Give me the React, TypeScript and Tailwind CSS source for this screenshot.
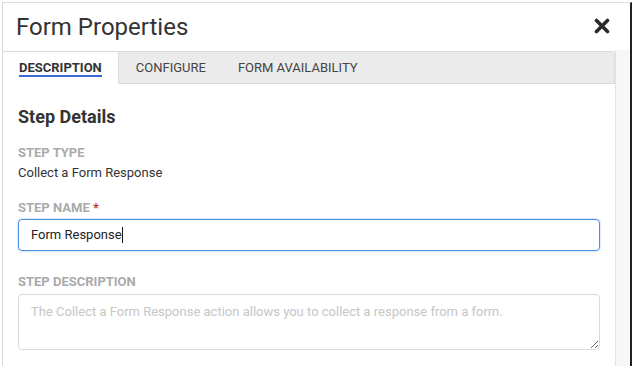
import React from "react";

export default function App() {
  return (
    <div className="w-[632px] h-[366px] bg-white pt-[2px] pl-[2px] overflow-hidden font-['Roboto',sans-serif]">
      <div className="h-[364px] flex flex-col border-t border-l border-t-[#dcdcdc] border-l-[#d6dbe3] border-r-2 border-r-[#222]">
        {/* Header */}
        <div className="h-[47px] flex items-center justify-between pl-[13px] pr-[20px] shrink-0">
          <div className="text-[24px] leading-[28px] text-[#333]">Form Properties</div>
          <svg width="16" height="16" viewBox="0 0 16 16" className="-mt-[1px]">
            <path d="M2.5 2.5 L13.5 13.5 M13.5 2.5 L2.5 13.5" stroke="#2b2b2b" strokeWidth="3.6" strokeLinecap="round" />
          </svg>
        </div>
        {/* Body */}
        <div className="flex flex-1 min-h-0">
          <div className="flex-1 min-w-0 pt-[1px]">
            {/* Tabs */}
            <div className="flex h-[33px] border-t border-r border-[#dcdcdc] rounded-tr-[3px] overflow-hidden">
              <div className="bg-white border-r border-[#dcdcdc] px-[16px] pt-[8px]">
                <div className="text-[13px] leading-[15px] font-bold text-[#333] border-b-2 border-[#3b69d6]">DESCRIPTION</div>
              </div>
              <div className="flex-1 flex bg-[#ebebeb] border-b border-[#d9d9d9] pl-[1px]">
                <div className="px-[16px] pt-[8px] text-[13px] leading-[15px] text-[#444]">CONFIGURE</div>
                <div className="px-[16px] pt-[8px] text-[13px] leading-[15px] text-[#444]">FORM AVAILABILITY</div>
              </div>
            </div>
            {/* Content */}
            <div className="pl-[15px] pr-[15px] pt-[22px] flex flex-col">
              <div className="text-[18px] leading-[21px] font-bold text-[#333]">Step Details</div>
              <div className="mt-[18px] text-[13px] leading-[15px] font-bold text-[#aaaaaa]">STEP TYPE</div>
              <div className="mt-[5px] text-[13px] leading-[15px] text-[#333]">Collect a Form Response</div>
              <div className="mt-[20px] text-[13px] leading-[15px] font-bold text-[#aaaaaa]">
                STEP NAME <span className="text-[#b5402f]">*</span>
              </div>
              <div className="mt-[4px] h-[32px] flex items-center rounded-[4px] border border-[#4a8fe6] shadow-[0_0_2px_rgba(74,143,230,0.6)] pl-[12px] text-[13px] text-[#222]">
                <span>Form Response</span>
                <span className="inline-block w-px h-[16px] bg-[#111]" />
              </div>
              <div className="mt-[23px] text-[13px] leading-[15px] font-bold text-[#aaaaaa]">STEP DESCRIPTION</div>
              <textarea
                readOnly
                placeholder="The Collect a Form Response action allows you to collect a response from a form."
                className="mt-[5px] h-[56px] w-full rounded-[4px] border border-[#dadada] pl-[12px] pt-[8px] text-[13px] leading-[18px] text-[#333] placeholder:text-[#c6c6c6] outline-none resize-y font-['Roboto',sans-serif]"
              />
            </div>
          </div>
          {/* Scrollbar track */}
          <div className="w-[15px] shrink-0 border-l border-[#e3e3e3] bg-[#f7f7f7]" />
        </div>
      </div>
    </div>
  );
}
